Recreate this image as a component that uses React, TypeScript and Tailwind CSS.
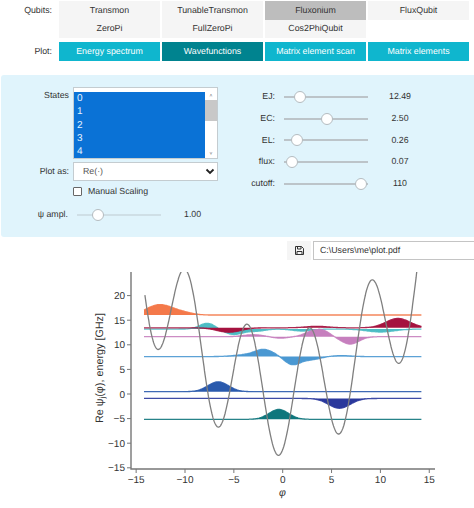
import React from "react";

const FONT = "font-['Liberation_Sans',Arial,sans-serif]";

const qubits = ["Transmon", "TunableTransmon", "Fluxonium", "FluxQubit", "ZeroPi", "FullZeroPi", "Cos2PhiQubit"];
const plots = ["Energy spectrum", "Wavefunctions", "Matrix element scan", "Matrix elements"];

const sliders = [
  { label: "EJ:", pos: 19, value: "12.49" },
  { label: "EC:", pos: 51, value: "2.50" },
  { label: "EL:", pos: 15.5, value: "0.26" },
  { label: "flux:", pos: 9.5, value: "0.07" },
  { label: "cutoff:", pos: 92, value: "110" },
];

// chart scale, in page pixels
const px = (phi: number) => 282.7 + phi * 9.77;
const py = (e: number) => 394 - e * 4.92;

type Bump = [number, number, number]; // centre, amplitude, sigma

const levels: { e: number; color: string; bumps: Bump[] }[] = [
  { e: 16.05, color: "#f4794a", bumps: [[-12.6, 2.1, 1.35], [-10.2, 0.4, 1]] },
  { e: 13.2, color: "#4dbcc4", bumps: [[-7.7, 1.2, 0.8], [-5, -1.1, 1], [-2.6, -0.4, 0.8], [2, -0.4, 1], [10, -0.6, 1.4]] },
  { e: 13.45, color: "#a5123f", bumps: [[-5.5, -0.9, 1.2], [3.5, 0.3, 1.2], [11.8, 1.9, 1.25]] },
  { e: 11.65, color: "#c67fbe", bumps: [[-3, 0.4, 1], [-0.3, -0.3, 0.8], [3, 1, 0.8], [4.2, 1, 0.7], [6.9, -1.5, 0.9]] },
  { e: 7.6, color: "#4a98d2", bumps: [[-4, 0.3, 1.2], [-1.9, 1.4, 1], [1, -1.6, 0.8], [2.9, -0.6, 0.9], [6, 0.2, 1]] },
  { e: 0.47, color: "#2a5aad", bumps: [[-6.6, 2, 1.05]] },
  { e: -0.9, color: "#2a389c", bumps: [[5.8, -2, 1.1]] },
  { e: -5.15, color: "#0f767c", bumps: [[-0.4, 2, 1]] },
];

function levelPaths(e: number, bumps: Bump[]) {
  const pts: string[] = [];
  for (let phi = -14.2; phi <= 14.2; phi += 0.1) {
    let v = e;
    for (const [c, a, s] of bumps) v += a * Math.exp(-((phi - c) ** 2) / (2 * s * s));
    pts.push(`${px(phi).toFixed(1)} ${py(v).toFixed(1)}`);
  }
  const line = "M" + pts.join("L");
  const fill = `${line}L${px(14.2)} ${py(e)}L${px(-14.2)} ${py(e)}Z`;
  return { line, fill };
}

function potentialPath() {
  const pts: string[] = [];
  for (let phi = -14.1; phi <= 14.1; phi += 0.05) {
    const v = -12.49 * Math.cos(phi + 0.44) + 0.13 * phi * phi;
    pts.push(`${px(phi).toFixed(1)} ${py(v).toFixed(1)}`);
  }
  return "M" + pts.join("L");
}

function Slider({ pos, muted }: { pos: number; muted?: boolean }) {
  return (
    <div className="relative h-[12px] w-[84px]">
      <div className={`absolute left-0 right-0 top-[5px] h-[2px] ${muted ? "bg-[#cfdfe6]" : "bg-[#bcc4c9]"}`} />
      <div
        className="absolute top-0 ml-[-6px] h-[12px] w-[12px] rounded-full border border-[#b4bcc0] bg-white"
        style={{ left: `${pos}%` }}
      />
    </div>
  );
}

function Chart() {
  const xticks = [-15, -10, -5, 0, 5, 10, 15];
  const yticks = [20, 15, 10, 5, 0, -5, -10, -15];
  return (
    <svg width="474" height="246" viewBox="0 262 474 246" className="block">
      <defs>
        <clipPath id="axes">
          <rect x="131" y="272" width="304" height="197" />
        </clipPath>
      </defs>
      <g clipPath="url(#axes)">
        {levels.map((l) => {
          const { line, fill } = levelPaths(l.e, l.bumps);
          return (
            <g key={l.color}>
              <path d={fill} fill={l.color} />
              <path d={line} fill="none" stroke={l.color} strokeWidth="1.3" strokeOpacity="0.9" />
            </g>
          );
        })}
        <path d={potentialPath()} fill="none" stroke="#7f7f7f" strokeWidth="1.3" />
      </g>
      <path d="M131 272V469H435" fill="none" stroke="#777" strokeWidth="1.4" />
      {xticks.map((t) => (
        <g key={t}>
          <path d={`M${px(t)} 469v4`} stroke="#777" />
          <text x={px(t)} y="483" textAnchor="middle" fontSize="10" fill="#333">
            {t < 0 ? `\u2212${-t}` : t}
          </text>
        </g>
      ))}
      {yticks.map((t) => (
        <g key={t}>
          <path d={`M127 ${py(t)}h4`} stroke="#777" />
          <text x="125" y={py(t) + 3.5} textAnchor="end" fontSize="10" fill="#333">
            {t < 0 ? `\u2212${-t}` : t}
          </text>
        </g>
      ))}
      <text x="282.5" y="496" textAnchor="middle" fontSize="10.5" fontStyle="italic" fill="#333">
        φ
      </text>
      <text
        transform="translate(103 368) rotate(-90)"
        textAnchor="middle"
        fontSize="10.8"
        fill="#333"
      >
        Re ψ<tspan fontSize="7.5" dy="2">j</tspan>
        <tspan dy="-2">(φ),  energy [GHz]</tspan>
      </text>
    </svg>
  );
}

export default function App() {
  return (
    <div className={`${FONT} h-[508px] w-[474px] overflow-hidden bg-white text-[8.8px] text-[#333] [text-rendering:geometricPrecision]`}>
      <div className="grid grid-cols-[57px_101px_101px_101px_101px] gap-x-[2px] pt-[1px]">
        <div className="flex h-[19px] items-center justify-end pr-[5px]">Qubits:</div>
        {qubits.slice(0, 4).map((q) => (
          <div
            key={q}
            className={`flex h-[19px] items-center justify-center ${q === "Fluxonium" ? "bg-[#bdbdbd]" : "bg-[#f5f5f5]"}`}
          >
            {q}
          </div>
        ))}
        <div />
        {qubits.slice(4).map((q) => (
          <div key={q} className="flex h-[18px] items-center justify-center bg-[#f5f5f5]">
            {q}
          </div>
        ))}
      </div>
      <div className="mt-[4px] grid grid-cols-[57px_101px_101px_101px_101px] gap-x-[2px]">
        <div className="flex h-[19px] items-center justify-end pr-[5px]">Plot:</div>
        {plots.map((p) => (
          <div
            key={p}
            className={`flex h-[19px] items-center justify-center text-white ${p === "Wavefunctions" ? "bg-[#00838f]" : "bg-[#0fb6ce]"}`}
          >
            {p}
          </div>
        ))}
      </div>

      <div className="ml-[1px] mt-[14px] flex h-[162px] rounded-l-[3px] bg-[#e0f4fc]">
        <div className="w-[239px] pt-[12px]">
          <div className="flex">
            <div className="w-[68px] pt-[2px] text-right">States</div>
            <div className="ml-[4px] flex h-[72px] w-[145px] border border-[#c4ccd0] bg-white pt-[4px]">
              <div className="w-[131px] bg-[#0a72d6] pl-[3px] text-[10px] leading-[13.3px] text-[#e4f2ff]">
                <div>0</div>
                <div>1</div>
                <div>2</div>
                <div>3</div>
                <div>4</div>
              </div>
              <div className="flex w-[12px] flex-col items-center justify-between text-[5px] text-[#666]">
                <span className="leading-[8px]">˄</span>
                <div className="mb-auto h-[21px] w-full bg-[#c8c8c8]" />
                <span className="leading-[8px]">˅</span>
              </div>
            </div>
          </div>
          <div className="mt-[3px] flex items-center">
            <div className="w-[68px] text-right">Plot as:</div>
            <div className="ml-[4px] flex h-[19px] w-[145px] items-center justify-between border border-[#c4ccd0] bg-white pl-[9px] pr-[2px] text-[#555]">
              <span>Re(·)</span>
              <svg width="10" height="7" viewBox="0 0 10 7">
                <path d="M1.5 1.5 5 5l3.500-3.500" fill="none" stroke="#222" strokeWidth="1.8" />
              </svg>
            </div>
          </div>
          <div className="ml-[72px] mt-[4px] flex items-center">
            <div className="h-[9px] w-[9px] rounded-[1px] border border-[#666] bg-white" />
            <span className="ml-[6px]">Manual Scaling</span>
          </div>
          <div className="mt-[10px] flex items-center">
            <div className="w-[67px] text-right">ψ ampl.</div>
            <div className="ml-[9px]">
              <Slider pos={25} muted />
            </div>
            <div className="ml-[23px]">1.00</div>
          </div>
        </div>
        <div className="pt-[16px]">
          {sliders.map((s) => (
            <div key={s.label} className="mb-[9.7px] flex h-[12px] items-center">
              <div className="w-[35px] text-right">{s.label}</div>
              <div className="ml-[9px]">
                <Slider pos={s.pos} />
              </div>
              <div className="ml-[16px] w-[32px] text-center">{s.value}</div>
            </div>
          ))}
        </div>
      </div>

      <div className="mt-[4px] flex h-[19px] overflow-hidden pl-[287px]">
        <div className="flex w-[24px] shrink-0 items-center justify-center bg-[#f5f5f5]">
          <svg width="9" height="9" viewBox="0 0 9 9">
            <path d="M.5.5h6l2 2v6h-8zM2.500.5v2.500h3.500V.5M2 8.500v-3h5v3" fill="none" stroke="#333" strokeWidth="1" />
          </svg>
        </div>
        <div className="ml-[2px] flex w-[180px] shrink-0 items-center border border-[#c4c4c4] pl-[6px]">C:\Users\me\plot.pdf</div>
      </div>
      <div className="mt-[2px]">
        <Chart />
      </div>
    </div>
  );
}
